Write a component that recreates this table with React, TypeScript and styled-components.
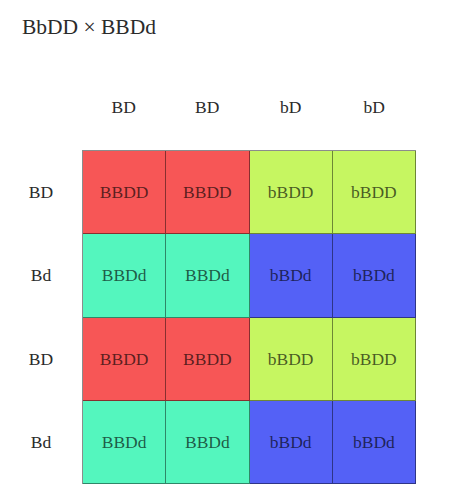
import styled, { createGlobalStyle } from "styled-components";

const GlobalStyle = createGlobalStyle`
    html, body {margin:0; padding:0; background:#fff;}
    body {font-family: "Liberation Serif", "Times New Roman", serif; color:#2b2b2b;}
`;

const Page = styled.div`
    width : 474px;
    height : 500px;
    padding-top : 14px;
    box-sizing : border-box;
`;

const Title = styled.h1`
    margin : 0 0 24px 22px;
    font-size : 21.5px;
    line-height : 26px;
    font-weight : 400;
    color : #2b2b2b;
`;

const Square = styled.div`
    display : grid;
    grid-template-columns : 82px 334px;
    grid-template-rows : 86px 334px;
`;

const HeaderRow = styled.div`
    grid-column : 2;
    display : grid;
    grid-template-columns : repeat(4, 1fr);
    align-items : center;
    justify-items : center;
    padding-top : 1px;
    font-size : 17.5px;
`;

const RowLabels = styled.div`
    display : grid;
    grid-template-rows : repeat(4, 1fr);
    align-items : center;
    justify-items : center;
    font-size : 17.5px;
    & span {padding-top:1px;}
`;

const Board = styled.div`
    display : grid;
    grid-template-columns : repeat(4, 1fr);
    grid-template-rows : repeat(4, 1fr);
    border-left : 1px solid rgba(0,0,0,0.45);
    border-top : 1px solid rgba(0,0,0,0.45);
`;

const Cell = styled.div<{ $bg: string }>`
    display : flex;
    align-items : center;
    justify-content : center;
    padding-top : 1px;
    background : ${p => p.$bg};
    border-right : 1px solid rgba(0,0,0,0.45);
    border-bottom : 1px solid rgba(0,0,0,0.45);
    font-size : 17.5px;
    color : rgba(0,0,0,0.65);
`;

const colors: Record<string, string> = {
    BBDD: "#f75656",
    bBDD: "#c6f661",
    BBDd: "#54f6be",
    bBDd: "#5461f6",
};

const cols = ["BD", "BD", "bD", "bD"];
const rows = ["BD", "Bd", "BD", "Bd"];

function combine(r: string, c: string) {
    // order: first parent's B first, then second B, D, D
    return c[0] + r[0] + c[1] + r[1];
}

export default function App() {
    return (
        <>
            <GlobalStyle />
            <Page>
                <Title>BbDD × BBDd</Title>
                <Square>
                    <HeaderRow>
                        {cols.map((c, i) => <span key={`c${i}`}>{c}</span>)}
                    </HeaderRow>
                    <RowLabels>
                        {rows.map((r, i) => <span key={`r${i}`}>{r}</span>)}
                    </RowLabels>
                    <Board>
                        {rows.map((r, i) =>
                            cols.map((c, j) => {
                                const g = combine(r, c);
                                return <Cell key={`${i}-${j}`} $bg={colors[g]}>{g}</Cell>
                            })
                        )}
                    </Board>
                </Square>
            </Page>
        </>
    )
}
